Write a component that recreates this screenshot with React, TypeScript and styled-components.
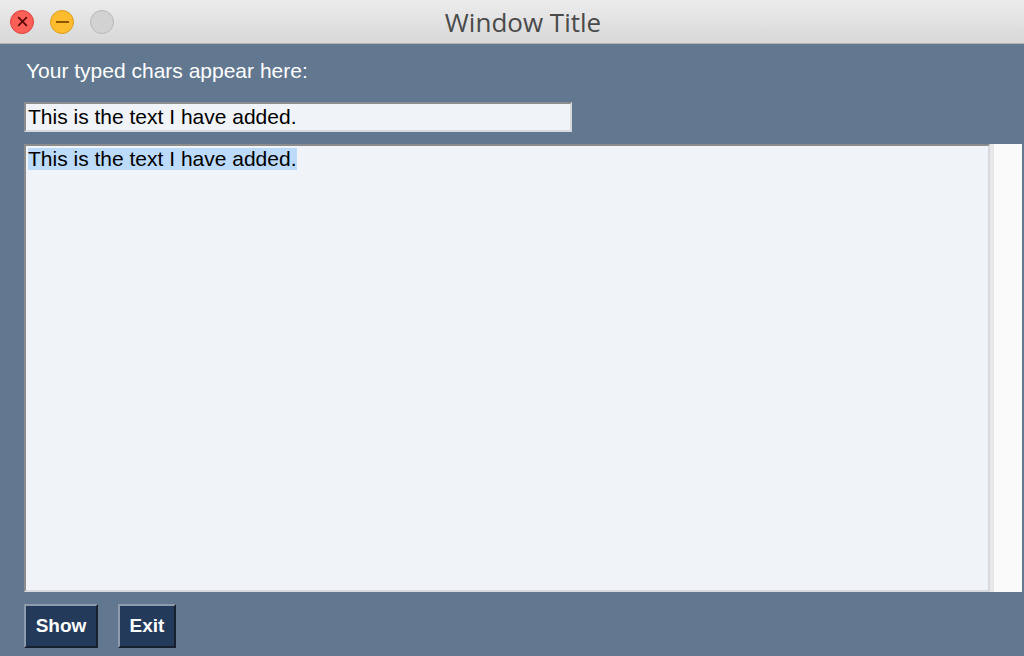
import React, { useState } from 'react';
import styled, { createGlobalStyle } from 'styled-components';

const GlobalStyle = createGlobalStyle`
  html, body {
    margin: 0;
    padding: 0;
    width: 1024px;
    height: 656px;
    overflow: hidden;
    background: #627890;
  }
`;

const Window = styled.div`
  width: 1024px;
  height: 656px;
  display: flex;
  flex-direction: column;
  font-family: 'Liberation Sans', Arial, sans-serif;
`;

const TitleBar = styled.div`
  height: 43px;
  flex-shrink: 0;
  display: flex;
  align-items: center;
  position: relative;
  background: linear-gradient(#ececec, #d8d8d8);
  border-bottom: 1px solid #b4b4b4;
`;

const Lights = styled.div`
  display: flex;
  gap: 16px;
  padding-left: 10px;
`;

const Light = styled.div<{ $fill: string; $edge: string }>`
  width: 22px;
  height: 22px;
  border-radius: 50%;
  background: ${(p) => p.$fill};
  border: 1px solid ${(p) => p.$edge};
  display: flex;
  align-items: center;
  justify-content: center;
`;

const Title = styled.div`
  position: absolute;
  left: 22px;
  right: 0;
  text-align: center;
  font-family: 'Open Sans', 'Liberation Sans', sans-serif;
  font-size: 26px;
  color: #4a4a4a;
  pointer-events: none;
`;

const Body = styled.div`
  flex: 1;
  display: flex;
  flex-direction: column;
  padding: 14px 2px 8px 24px;
`;

const Label = styled.div`
  color: #ffffff;
  font-size: 21px;
  padding-left: 2px;
  height: 26px;
  line-height: 26px;
`;

const Entry = styled.input`
  margin-top: 18px;
  width: 548px;
  height: 30px;
  box-sizing: border-box;
  border: 2px solid;
  border-color: #8c8c8c #d7d9de #d7d9de #8c8c8c;
  background: #f0f3f8;
  font-family: 'Liberation Sans', Arial, sans-serif;
  font-size: 21px;
  color: #000;
  padding: 0 2px;
  outline: none;
`;

const TextRow = styled.div`
  margin-top: 12px;
  display: flex;
  height: 448px;
`;

const TextArea = styled.div`
  flex: 1;
  box-sizing: border-box;
  border: 2px solid;
  border-color: #8c8c8c #d7d9de #d7d9de #8c8c8c;
  background: #f0f3f8;
  padding: 2px 2px;
  font-size: 21px;
  line-height: 22px;
  color: #000;
`;

const Selected = styled.span`
  display: inline-block;
  line-height: 22px;
  background: #bcdaf9;
`;

const ScrollBar = styled.div`
  width: 28px;
  background: #fafafa;
  border-left: 4px solid #e8e8e8;
`;

const ButtonRow = styled.div`
  margin-top: 12px;
  display: flex;
  gap: 20px;
`;

const Button = styled.button<{ $w: number }>`
  width: ${(p) => p.$w}px;
  height: 44px;
  box-sizing: border-box;
  background: #243a5a;
  color: #ffffff;
  font-family: 'Liberation Sans', Arial, sans-serif;
  font-size: 19px;
  font-weight: bold;
  border: 2px solid;
  border-color: #8d9bac #16202e #16202e #8d9bac;
  padding: 0;
  cursor: pointer;
`;

export default function App() {
  const [text, setText] = useState('This is the text I have added.');

  return (
    <>
      <GlobalStyle />
      <Window>
        <TitleBar>
          <Lights>
            <Light $fill="#fe5f57" $edge="#d9443d">
              <svg width="13" height="13" viewBox="0 0 12 12">
                <path d="M2 2 L10 10 M10 2 L2 10" stroke="#5a0a06" strokeWidth="1.6" />
              </svg>
            </Light>
            <Light $fill="#fdbc2e" $edge="#dc9d1c">
              <svg width="15" height="4" viewBox="0 0 15 4">
                <path d="M1 2 H14" stroke="#8a5600" strokeWidth="2" />
              </svg>
            </Light>
            <Light $fill="#d2d2d2" $edge="#b9b9b9" />
          </Lights>
          <Title>Window Title</Title>
        </TitleBar>
        <Body>
          <Label>Your typed chars appear here:</Label>
          <Entry value={text} onChange={(e) => setText(e.target.value)} />
          <TextRow>
            <TextArea>
              <Selected>{text}</Selected>
            </TextArea>
            <ScrollBar />
          </TextRow>
          <ButtonRow>
            <Button $w={74}>Show</Button>
            <Button $w={58}>Exit</Button>
          </ButtonRow>
        </Body>
      </Window>
    </>
  );
}
